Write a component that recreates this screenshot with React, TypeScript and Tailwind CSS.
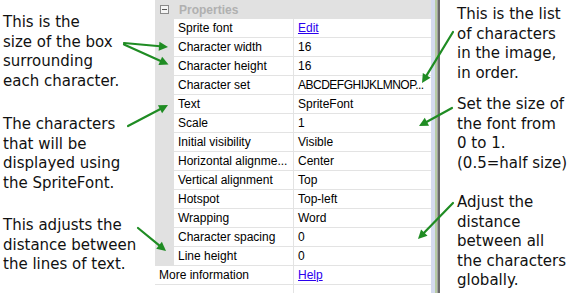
import React from 'react'

type Row = { label: string; value: string; link?: boolean }

const rows: Row[] = [
  { label: 'Sprite font', value: 'Edit', link: true },
  { label: 'Character width', value: '16' },
  { label: 'Character height', value: '16' },
  { label: 'Character set', value: 'ABCDEFGHIJKLMNOP...' },
  { label: 'Text', value: 'SpriteFont' },
  { label: 'Scale', value: '1' },
  { label: 'Initial visibility', value: 'Visible' },
  { label: 'Horizontal alignme...', value: 'Center' },
  { label: 'Vertical alignment', value: 'Top' },
  { label: 'Hotspot', value: 'Top-left' },
  { label: 'Wrapping', value: 'Word' },
  { label: 'Character spacing', value: '0' },
  { label: 'Line height', value: '0' },
]

// arrows: [fromX, fromY, tipX, tipY]
const arrows: [number, number, number, number][] = [
  [124, 43, 168, 47],
  [124, 44.5, 168.5, 64.5],
  [128, 126, 168, 105],
  [138, 228, 166, 251],
  [453, 32, 422, 83],
  [452, 108, 419, 126],
  [453, 203, 418, 239],
]

function Arrow({ a }: { a: [number, number, number, number] }) {
  const [x1, y1, x2, y2] = a
  const dx = x2 - x1
  const dy = y2 - y1
  const len = Math.hypot(dx, dy)
  const ux = dx / len
  const uy = dy / len
  const hl = 9
  const hw = 4.5
  const bx = x2 - ux * hl
  const by = y2 - uy * hl
  const pts = `${x2},${y2} ${bx - uy * hw},${by + ux * hw} ${bx + uy * hw},${by - ux * hw}`
  return (
    <g>
      <line x1={x1} y1={y1} x2={bx + ux * 1} y2={by + uy * 1} stroke="#1f8c23" strokeWidth={2.2} strokeLinecap="round" />
      <polygon points={pts} fill="#1f8c23" />
    </g>
  )
}

function Note({ lines, className }: { lines: string[]; className?: string }) {
  return (
    <div className={'text-[15px] leading-[19.5px] text-[#111] whitespace-nowrap ' + (className ?? '')}>
      {lines.map((l, i) => (
        <div key={i}>{l}</div>
      ))}
    </div>
  )
}

export default function App() {
  return (
    <div className="relative w-[578px] h-[293px] bg-white flex overflow-hidden" style={{ fontFamily: '"DejaVu Sans", sans-serif' }}>
      {/* left notes */}
      <div className="w-[155px] shrink-0 pl-[3px] flex flex-col">
        <Note className="mt-[13px]" lines={['This is the', 'size of the box', 'surrounding', 'each character.']} />
        <Note className="mt-[24px]" lines={['The characters', 'that will be', 'displayed using', 'the SpriteFont.']} />
        <Note className="mt-[23px]" lines={['This adjusts the', 'distance between', 'the lines of text.']} />
      </div>

      {/* properties panel */}
      <div className="w-[285px] shrink-0 flex text-[12px] text-black" style={{ fontFamily: '"Liberation Sans", Arial, sans-serif' }}>
        <div className="w-[276px] flex flex-col">
          <div className="h-[19px] bg-[#e1e1e1] flex items-center pl-[5px]">
            <svg width="9" height="9" viewBox="0 0 9 9" className="mb-[1px]">
              <rect x="0.5" y="0.5" width="8" height="8" fill="#f4f4f4" stroke="#8a8a8a" />
              <line x1="2" y1="4.5" x2="7" y2="4.5" stroke="#555" />
            </svg>
            <span className="ml-[10px] font-bold text-[#b0b0b0]">Properties</span>
          </div>
          {rows.map(r => (
            <div key={r.label} className="flex h-[19px]">
              <div className="w-[19px] bg-[#e1e1e1]" />
              <div className="w-[120px] border-r border-b border-[#e3e3e3] pl-[4px] flex items-center whitespace-nowrap">
                {r.label}
              </div>
              <div className="flex-1 border-b border-[#e3e3e3] pl-[4px] flex items-center whitespace-nowrap">
                {r.link ? (
                  <span className="text-[#2a00ee] underline">{r.value}</span>
                ) : (
                  <span className={r.label === 'Character set' ? 'tracking-[-0.5px]' : ''}>{r.value}</span>
                )}
              </div>
            </div>
          ))}
          <div className="flex h-[19px]">
            <div className="w-[139px] border-r border-b border-[#e3e3e3] pl-[4px] flex items-center">More information</div>
            <div className="flex-1 border-b border-[#e3e3e3] pl-[4px] flex items-center">
              <span className="text-[#2a00ee] underline">Help</span>
            </div>
          </div>
          <div className="flex flex-1">
            <div className="w-[139px] border-r border-[#e3e3e3]" />
          </div>
        </div>
        <div className="w-[4px] bg-[#d5dbef]" />
        <div className="w-[2px] bg-[#b7cba4]" />
        <div className="w-[1px] bg-[#a2a2a2]" />
        <div className="w-[2px] bg-[#6a6a6a]" />
      </div>

      {/* right notes */}
      <div className="flex-1 pl-[17px] flex flex-col">
        <Note className="mt-[5px]" lines={['This is the list', 'of characters', 'in the image,', 'in order.']} />
        <Note className="mt-[12px]" lines={['Set the size of', 'the font from', '0 to 1.', '(0.5=half size)']} />
        <Note className="mt-[20px]" lines={['Adjust the', 'distance', 'between all', 'the characters', 'globally.']} />
      </div>

      <svg className="absolute inset-0 pointer-events-none" width="578" height="293" viewBox="0 0 578 293">
        {arrows.map((a, i) => (
          <Arrow key={i} a={a} />
        ))}
      </svg>
    </div>
  )
}
